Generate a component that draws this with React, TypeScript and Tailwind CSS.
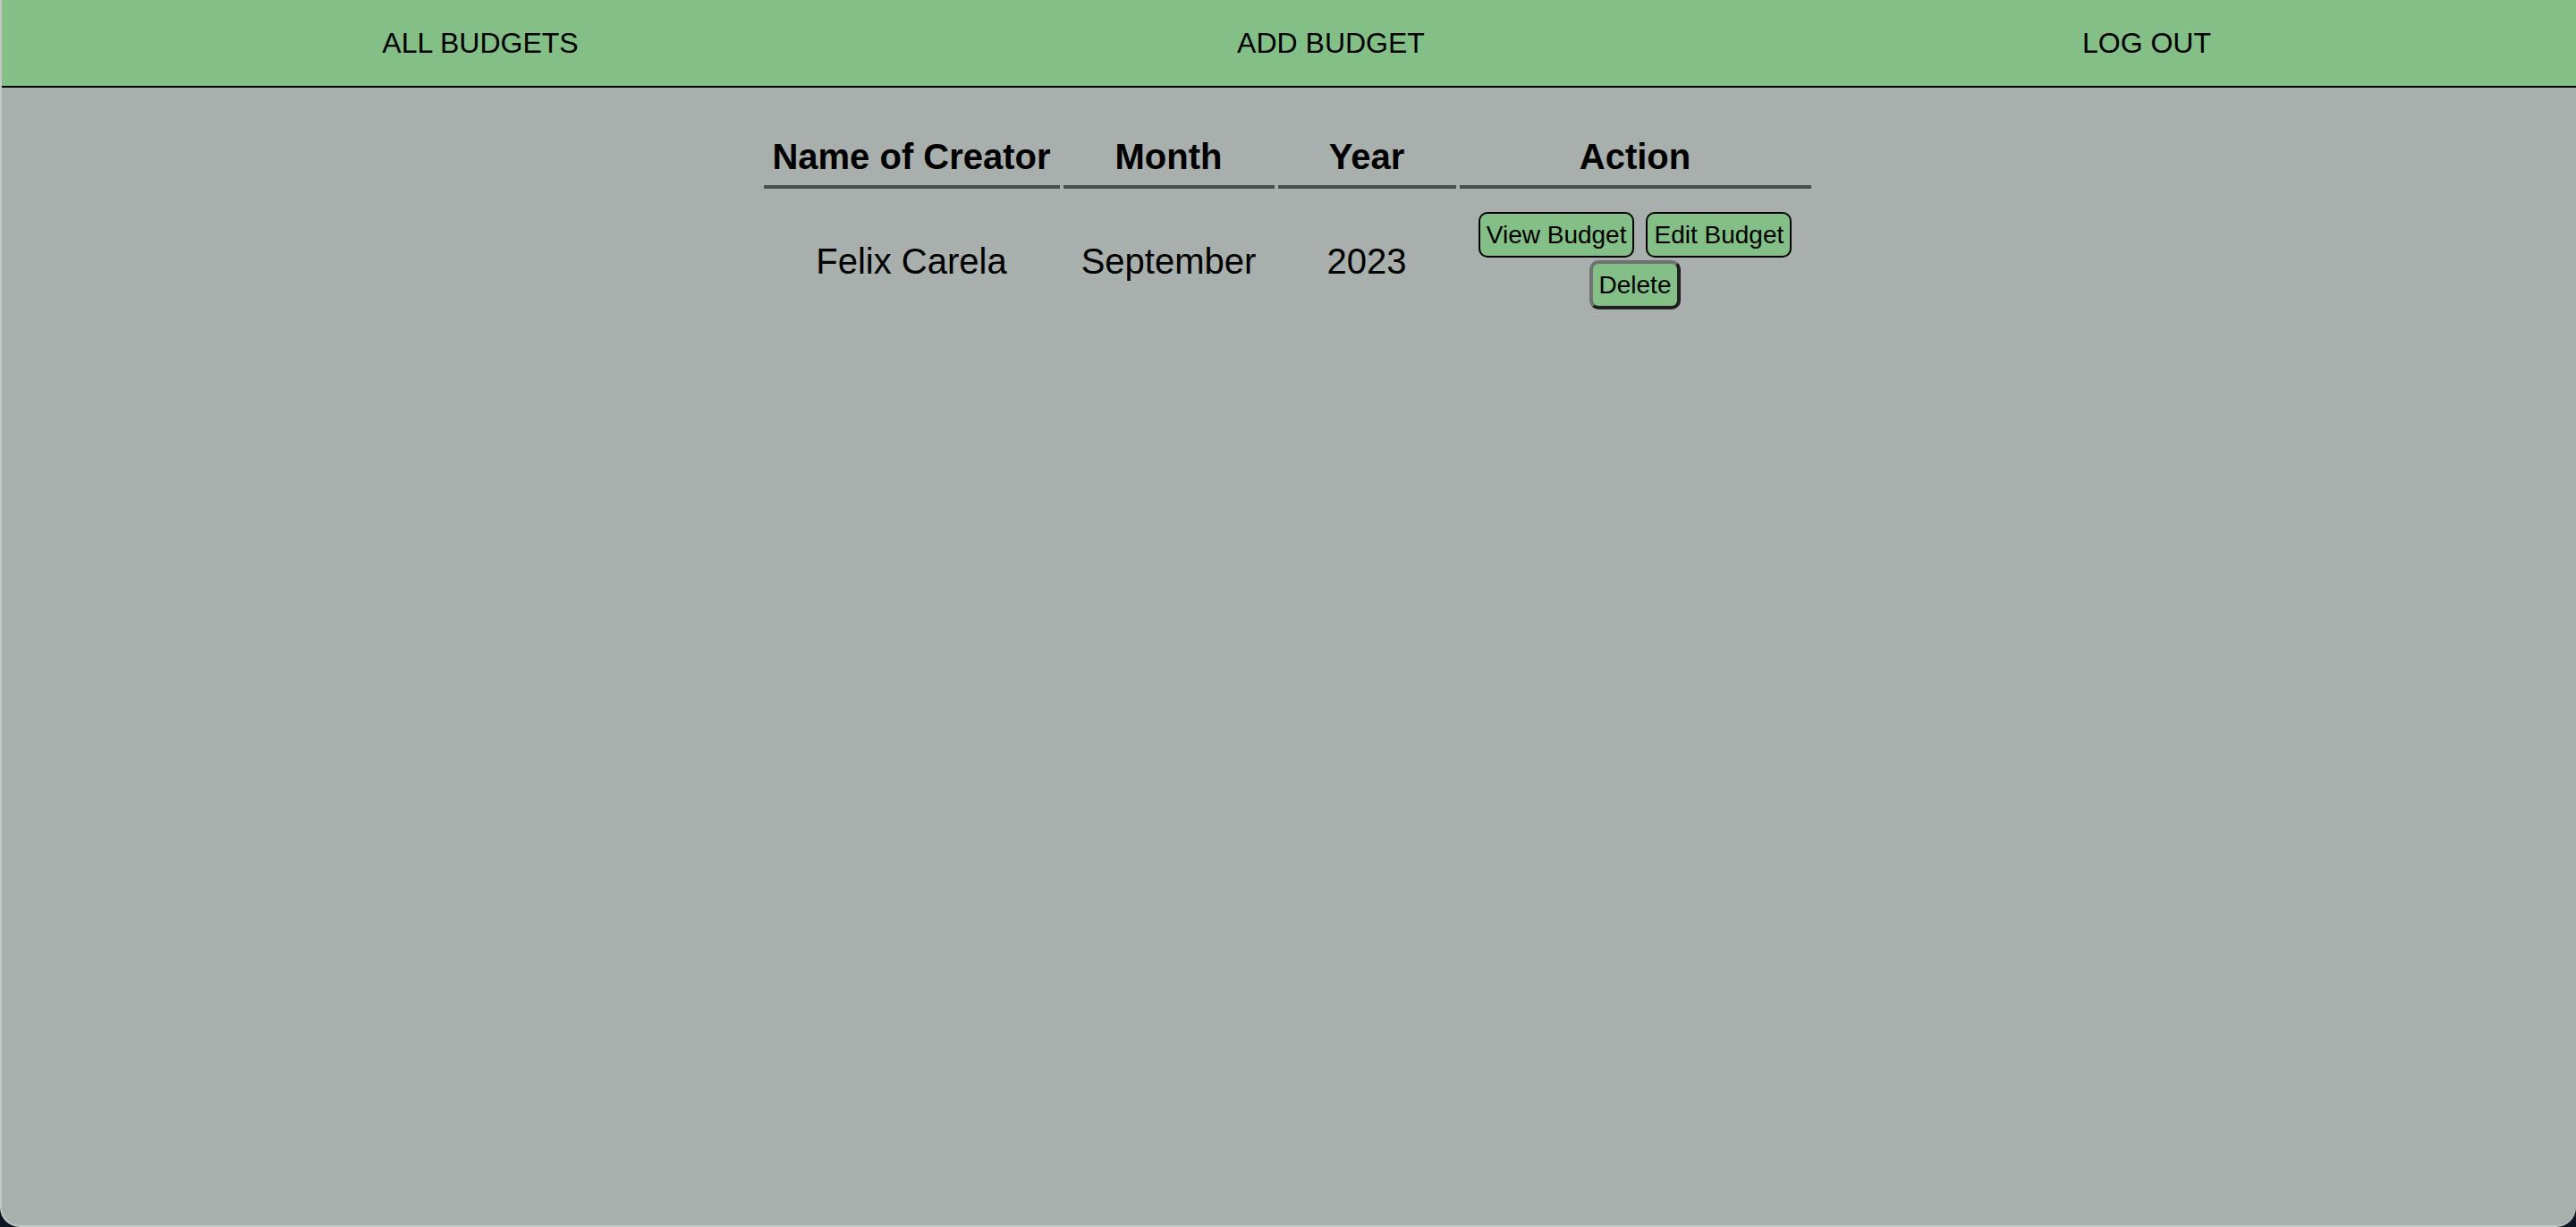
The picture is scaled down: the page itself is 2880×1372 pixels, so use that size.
const font = { fontFamily: '"Liberation Sans", Arial, Helvetica, sans-serif' };

function NavBar() {
  return (
    <nav className="flex h-[98px] items-center border-b-2 border-black bg-[#83bf86] text-[32px] text-black">
      <div className="w-[1070px] text-center">ALL BUDGETS</div>
      <div className="w-[832px] text-center">ADD BUDGET</div>
      <div className="ml-4 flex-1 text-center">LOG OUT</div>
    </nav>
  );
}

function BudgetTable() {
  const headers = [
    { label: "Name of Creator", width: "w-[331px]" },
    { label: "Month", width: "w-[236px]" },
    { label: "Year", width: "w-[199px]" },
    { label: "Action", width: "w-[393px]" },
  ];

  return (
    <table className="mx-auto mt-[42px] -translate-x-[2px] border-separate border-spacing-[4px] text-black">
      <thead>
        <tr>
          {headers.map((h) => (
            <th
              key={h.label}
              className={`${h.width} border-b-4 border-[#4b4f4d] px-0 pt-2 pb-[9px] text-center text-[40px] font-bold leading-[46px]`}
            >
              {h.label}
            </th>
          ))}
        </tr>
      </thead>
      <tbody>
        <tr className="text-[40px] leading-[46px]">
          <td className="py-[22px] text-center align-middle">Felix Carela</td>
          <td className="py-[22px] text-center align-middle">September</td>
          <td className="py-[22px] text-center align-middle">2023</td>
          <td className="py-[22px] align-middle">
            <div className="flex flex-col items-center gap-[3px]">
              <div className="flex gap-[13px]">
                <button className="flex h-[51px] items-center rounded-[10px] border-2 border-black bg-[#83bf86] px-[7px] text-[28px] leading-none">
                  View Budget
                </button>
                <button className="flex h-[51px] items-center rounded-[10px] border-2 border-black bg-[#83bf86] px-[7px] text-[28px] leading-none">
                  Edit Budget
                </button>
              </div>
              <button className="flex h-[55px] items-center rounded-[10px] border-4 border-t-[#717171] border-l-[#717171] border-b-[#1f1f1f] border-r-[#1f1f1f] bg-[#83bf86] px-[7px] text-[28px] leading-none">
                Delete
              </button>
            </div>
          </td>
        </tr>
      </tbody>
    </table>
  );
}

export default function App() {
  return (
    <div className="h-screen bg-[#0e1622]" style={font}>
      <div className="h-full overflow-hidden rounded-b-[22px] border-b-2 border-l-2 border-[#c3c8c5] bg-[#a9afac]">
        <NavBar />
        <BudgetTable />
      </div>
    </div>
  );
}
